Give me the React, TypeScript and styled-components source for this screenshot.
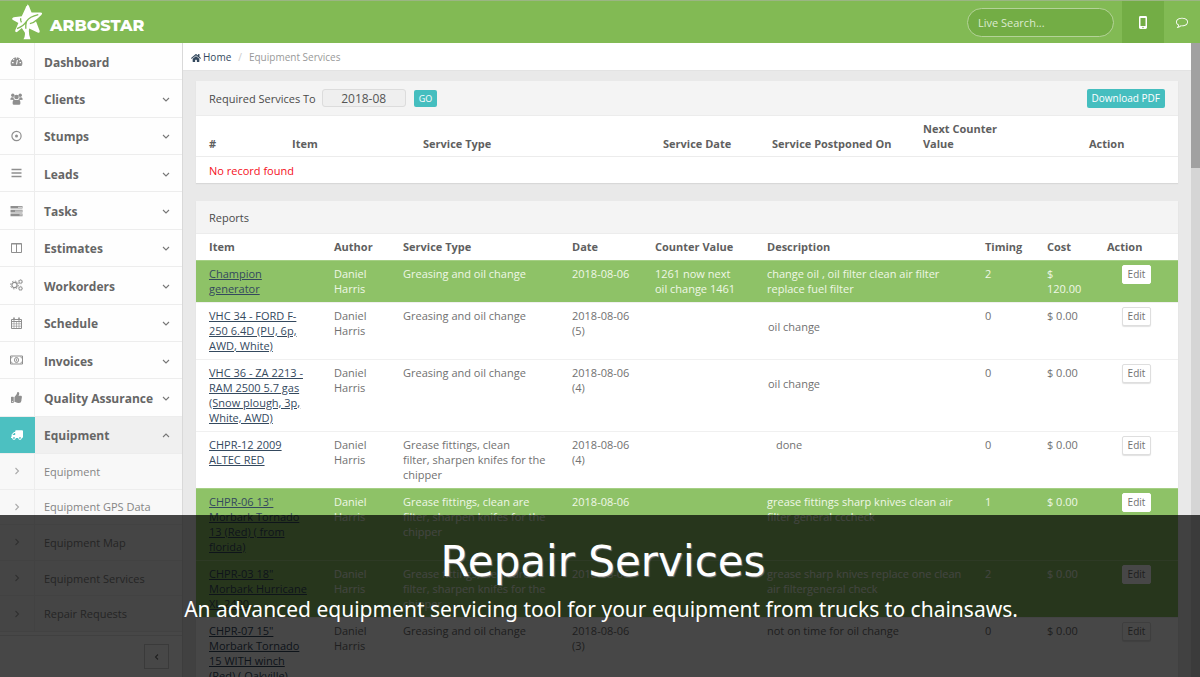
import React from "react";
import styled, { createGlobalStyle, css } from "styled-components";
import { FaHome, FaThumbsUp, FaTruck } from "react-icons/fa";

const Global = createGlobalStyle`
  *, *::before, *::after { box-sizing: border-box; }
  html, body, #root { height: 100%; }
  body {
    margin: 0;
    background: #e9e9e9;
    color: #717171;
    font: 11px/15px "Open Sans", "Noto Sans", sans-serif;
  }
  button, input { font: inherit; color: inherit; margin: 0; }
  ul, ol { list-style: none; margin: 0; padding: 0; }
  a { color: inherit; text-decoration: none; }
`;

const Page = styled.div`
  position: relative;
  display: flex;
  flex-direction: column;
  height: 100vh;
  overflow: hidden;
`;

/* ---------- top bar ---------- */

const TopBar = styled.header`
  display: flex;
  align-items: center;
  flex: none;
  height: 43px;
  padding-left: 12px;
  background: #82ba54;
  border-top: 1px solid #9bb584;
`;

const Brand = styled.a`
  display: flex;
  align-items: center;
  gap: 7px;
  margin-right: auto;
  color: #fff;
  font: 800 16px/20px Montserrat, "Open Sans", sans-serif;

  svg { width: 31px; height: 36px; }
  span { padding-top: 7px; }
`;

const Search = styled.input`
  width: 147px;
  height: 29px;
  margin-right: 8px;
  padding: 0 10px;
  border: 1px solid #b4d398;
  border-radius: 15px;
  background: #73ad45;
  color: #fff;
  outline: none;

  &::placeholder { color: #dcebcf; opacity: 1; }
`;

const TopButton = styled.button<{ $dark?: boolean }>`
  display: flex;
  align-items: center;
  justify-content: center;
  width: ${(p) => (p.$dark ? 42 : 36)}px;
  height: 42px;
  padding: 0;
  border: 0;
  background: ${(p) => (p.$dark ? "#73ad45" : "transparent")};
  color: #fff;
`;

/* ---------- sidebar ---------- */

const Body = styled.div`
  display: flex;
  flex: 1;
  min-height: 0;
`;

const Sidebar = styled.nav`
  flex: none;
  display: flex;
  flex-direction: column;
  width: 183px;
  background: #fefefe;
  border-right: 1px solid #d9d9d9;
`;

const MainMenu = styled.ul`
  flex: none;
  display: grid;
  grid-template-rows: repeat(11, 1fr);
  height: 411px;
`;

const SubMenu = styled.ul`
  flex: none;
  display: grid;
  grid-template-rows: repeat(5, 1fr);
  height: 178px;
  background: #f8f8f8;
`;

const MenuLink = styled.a<{ $active?: boolean; $sub?: boolean }>`
  display: flex;
  align-items: center;
  height: 100%;
  border-bottom: 1px solid #ededed;
  background: ${(p) => (p.$active ? "#f0f0f0" : "transparent")};
  color: ${(p) => (p.$sub ? "#858585" : "#666")};
  font-size: ${(p) => (p.$sub ? 11 : 12)}px;
  font-weight: ${(p) => (p.$sub ? 400 : 700)};
`;

const MenuIcon = styled.span<{ $active?: boolean; $sub?: boolean }>`
  display: flex;
  align-items: center;
  justify-content: center;
  align-self: stretch;
  width: 35px;
  margin-right: 9px;
  padding-right: 1px;
  border-right: 1px solid ${(p) => (p.$active ? "#4cc0c1" : "#ededed")};
  background: ${(p) => (p.$active ? "#4cc0c1" : "transparent")};
  color: ${(p) => (p.$active ? "#fff" : p.$sub ? "#aaa" : "#8f8f8f")};
`;

const MenuLabel = styled.span`
  padding-top: 2px;
`;

const Toggle = styled.span`
  display: flex;
  margin-left: auto;
  padding: 1px 12px 0 0;
  color: #777;
`;

const SidebarFooter = styled.div`
  flex: 1;
  display: flex;
  justify-content: flex-end;
  align-items: flex-start;
  margin-top: 3px;
  padding: 8px 13px;
  border-top: 1px solid #e4e4e4;
`;

const Collapse = styled.button`
  display: flex;
  align-items: center;
  justify-content: center;
  width: 25px;
  height: 25px;
  padding: 0;
  border: 1px solid #d0d0d0;
  background: #fff;
`;

/* ---------- content ---------- */

const Content = styled.main`
  flex: 1;
  min-width: 0;
  overflow: hidden;
`;

const Breadcrumb = styled.ol`
  display: flex;
  align-items: center;
  height: 28px;
  padding: 2px 8px 0;
  background: #fff;
  border-bottom: 1px solid #e3e3e3;
  color: #999;
  font-size: 10px;

  a { display: flex; align-items: center; gap: 2px; color: #34495e; }
  li + li::before { content: "/"; padding: 0 7px; color: #ccc; }
`;

const Panels = styled.div`
  display: flex;
  flex-direction: column;
  gap: 18px;
  padding: 10px 13px;
`;

const Panel = styled.section`
  background: #fff;
  box-shadow: 0 1px 1px #d8d8d8;
`;

const PanelHead = styled.header<{ $tall?: boolean }>`
  display: flex;
  align-items: center;
  height: ${(p) => (p.$tall ? 35 : 33)}px;
  padding: 0 13px;
  background: #f4f4f4;
  border-bottom: 1px solid #ececec;
  color: #4a4a4a;
`;

const PanelTitle = styled.h2`
  margin: 0;
  font-size: 11px;
  font-weight: 400;
`;

const MonthField = styled.input`
  width: 84px;
  height: 18px;
  margin: 0 8px 0 6px;
  padding: 0;
  border: 1px solid #dcdcdc;
  border-radius: 3px;
  background: #efefef;
  color: #555;
  font-size: 12px;
  text-align: center;
`;

const Accent = styled.button<{ $end?: boolean }>`
  height: ${(p) => (p.$end ? 19 : 17)}px;
  margin-left: ${(p) => (p.$end ? "auto" : "0")};
  padding: 0 5px;
  border: 0;
  border-radius: 2px;
  background: #45bebf;
  color: #fff;
  font-size: ${(p) => (p.$end ? 10 : 9)}px;
  line-height: 17px;
`;

const Table = styled.table`
  width: 100%;
  table-layout: fixed;
  border-collapse: collapse;

  th, td { padding: 5px 8px; text-align: left; }
  th:first-child, td:first-child { padding-left: 13px; padding-right: 16px; }
  th { color: #5f5f5f; font-weight: 700; vertical-align: bottom; }
  td { vertical-align: top; white-space: pre-line; }
`;

const RequiredTable = styled(Table)`
  th { border-bottom: 1px solid #ececec; }
  tbody td { padding-top: 6px; color: #f5101c; }
`;

const ReportsTable = styled(Table)`
  th { height: 26px; vertical-align: middle; }
  td { padding-bottom: 6px; border-top: 1px solid #f0f0f0; }
`;

const Row = styled.tr<{ $done?: boolean }>`
  ${(p) =>
    p.$done &&
    css`
      background: #8ec267;
      color: #eef7e6;
      td { border-top-color: #a5cf85; }
    `}
`;

const ItemLink = styled.a`
  color: #34495e;
  text-decoration: underline;
`;

const Note = styled.p<{ $indent?: boolean }>`
  margin: ${(p) => (p.$indent ? "0 0 0 9px" : "11px 0 0 1px")};
`;

const EditButton = styled.button`
  display: block;
  width: 29px;
  height: 19px;
  margin: -1px 0 -3px 15px;
  padding: 0;
  border: 1px solid #dedede;
  border-radius: 2px;
  background: #fff;
  box-shadow: 0 1px 1px #e2e2e2;
  color: #717171;
  font-size: 10px;
  line-height: 15px;

  ${Row}[data-done="true"] & { border-color: #fff; box-shadow: none; }
`;

const ScrollTrack = styled.div`
  flex: none;
  width: 9px;
  background: #d5d5d5;
`;

const ScrollThumb = styled.div`
  height: 125px;
  background: #a1a1a1;
`;

/* ---------- caption over the page ---------- */

const Caption = styled.div`
  position: absolute;
  left: 0;
  right: 0;
  bottom: 0;
  height: 162px;
  padding-top: 22px;
  background: rgba(0, 0, 0, 0.72);
  color: #fff;
  text-align: center;

  h1 {
    margin: 0;
    padding-left: 6px;
    font: 400 42px/50px "DejaVu Sans", Verdana, sans-serif;
    text-shadow: 1px 1px 1px #777;
  }
  p {
    margin: 8px 0 0;
    font: 400 21px/28px "Noto Sans", "Open Sans", sans-serif;
    padding-left: 2px;
  }
`;

/* ---------- icons ---------- */

const Glyph = ({ children, w = 13, h = 12 }: { children: React.ReactNode; w?: number; h?: number }) => (
  <svg width={w} height={h} viewBox={`0 0 ${w} ${h}`} fill="none" stroke="currentColor" strokeWidth="1" aria-hidden="true">
    {children}
  </svg>
);

const Chevron = ({ d }: { d: "up" | "down" | "left" | "right" }) => {
  const paths = {
    up: "M1 6l3-3 3 3",
    down: "M1 3l3 3 3-3",
    left: "M5 1.5L2.5 4 5 6.5",
    right: "M2.5 1l3 3-3 3",
  };
  return (
    <Glyph w={8} h={8}>
      <path d={paths[d]} strokeWidth="1.1" />
    </Glyph>
  );
};

const Logo = () => (
  <svg viewBox="35 13 92 106" aria-hidden="true">
    <path fill="#fff" d="M80 14q4 0 6 6l7 18 26 0q9 1 3 7L105 61l12 31q1 8-6 5L86 85l-1 8q0 14 5 24H69q6-10 4-20l-9-13-13 11q-8 4-6-5l9-21-16-9q-6-5 2-8l24-3 11-24q2-7 5-7z" />
    <path fill="none" stroke="#82ba54" strokeWidth="4" d="M50 86q20-9 28-22 9-14 35-20M63 67q-4-6-2-12M88 71q10-1 20-11M78 64q-3 10-2 22" />
  </svg>
);

const icons: Record<string, React.ReactNode> = {
  Dashboard: (
    <Glyph>
      <path d="M1.6 10.5A5.4 5.4 0 1 1 11.4 10.5z" fill="currentColor" />
      <path stroke="#fff" strokeWidth="1.1" d="M6.5 9.5L7.4 5M2 7.6h1.6M9.6 7.6H11M3.2 4.2l1 1M6.5 2.3v1.3M9.8 4.2l-.8.9" />
    </Glyph>
  ),
  Clients: (
    <Glyph>
      <g fill="currentColor" stroke="none">
        <circle cx="2.8" cy="2.2" r="1.7" />
        <circle cx="10.2" cy="2.2" r="1.7" />
        <circle cx="6.5" cy="4" r="2.3" />
        <path d="M.3 6.8q0-2.6 1.5-2.6l2 .4q-.4 1.4.4 2.5zM12.7 6.8q0-2.6-1.5-2.6l-2 .4q.4 1.4-.4 2.5zM2.6 10.2q0-3.6 2-3.7 1.9 1.2 3.8 0 2 .1 2 3.7 0 1.5-1.3 1.5H3.9q-1.3 0-1.3-1.5z" />
      </g>
    </Glyph>
  ),
  Stumps: (
    <Glyph>
      <circle cx="6.5" cy="6" r="4.6" strokeWidth="1.2" />
      <circle cx="6.5" cy="6" r="1.5" fill="currentColor" stroke="none" />
    </Glyph>
  ),
  Leads: (
    <Glyph>
      <path d="M1.5 2.5h10M1.5 6h10M1.5 9.5h10" strokeWidth="1.3" />
    </Glyph>
  ),
  Tasks: (
    <Glyph>
      <path fill="currentColor" stroke="none" d="M.5 1h12v2.6H.5zM.5 4.8h12v2.6H.5zM.5 8.6h12v2.6H.5z" />
      <path stroke="#fff" strokeWidth=".7" d="M8 2.3h4M5 6.1h7M9.5 9.9H12" />
    </Glyph>
  ),
  Estimates: (
    <Glyph>
      <path d="M1.5 1.5h10v9h-10zM6.5 1.5v9M1.5 2h10" />
    </Glyph>
  ),
  Workorders: (
    <Glyph>
      <circle cx="4.5" cy="6" r="2.6" strokeWidth="1.2" />
      <circle cx="4.5" cy="6" r="3.9" strokeWidth="1" strokeDasharray="1.5 1.56" />
      <circle cx="10.5" cy="2.7" r="1.5" />
      <circle cx="10.5" cy="9.4" r="1.5" />
      <circle cx="10.5" cy="2.7" r="2.2" strokeWidth=".6" strokeDasharray="1 .73" />
      <circle cx="10.5" cy="9.4" r="2.2" strokeWidth=".6" strokeDasharray="1 .73" />
    </Glyph>
  ),
  Schedule: (
    <Glyph>
      <path d="M1.5 2.5h10v9h-10zM1.5 4.5h10" />
      <path strokeWidth=".6" d="M4 4.5v7M6.5 4.5v7M9 4.5v7M1.5 6.8h10M1.5 9.2h10" />
      <path strokeWidth="1.6" d="M4 .4v3M9 .4v3" />
    </Glyph>
  ),
  Invoices: (
    <Glyph>
      <path d="M.5 2h12v8H.5z" />
      <ellipse cx="6.5" cy="6" rx="2" ry="2.5" />
      <path d="M6.5 4.6v2.8M1 4q1.3 0 1.3-1.5M12 4q-1.3 0-1.3-1.5M1 8q1.3 0 1.3 1.5M12 8q-1.3 0-1.3 1.5" strokeWidth=".8" />
    </Glyph>
  ),
  "Quality Assurance": <FaThumbsUp size={11} />,
  Equipment: <FaTruck size={12} transform="scale(-1 1)" />,
};

/* ---------- data ---------- */

const menu = ["Dashboard", "Clients", "Stumps", "Leads", "Tasks", "Estimates", "Workorders", "Schedule", "Invoices", "Quality Assurance", "Equipment"];
const subMenu = ["Equipment", "Equipment GPS Data", "Equipment Map", "Equipment Services", "Repair Requests"];

const requiredCols: [React.ReactNode, number][] = [
  ["#", 88],
  ["Item", 131],
  ["Service Type", 240],
  ["Service Date", 109],
  ["Service Postponed On", 151],
  [<>Next Counter<br />Value</>, 166],
  ["Action", 97],
];

const reportCols: [string, number][] = [
  ["Item", 130],
  ["Author", 69],
  ["Service Type", 169],
  ["Date", 83],
  ["Counter Value", 112],
  ["Description", 218],
  ["Timing", 62],
  ["Cost", 60],
  ["Action", 79],
];

const share = (w: number) => `${(w / 982) * 100}%`;

type Report = {
  item: string;
  type: string;
  date: string;
  counter?: string;
  text: React.ReactNode;
  timing: number;
  cost: string;
  done?: boolean;
};

const reports: Report[] = [
  { item: "Champion generator", type: "Greasing and oil change", date: "2018-08-06", counter: "1261 now next\noil change 1461", text: "change oil , oil filter clean air filter\nreplace fuel filter", timing: 2, cost: "$\n120.00", done: true },
  { item: "VHC 34 - FORD F-250 6.4D (PU, 6p, AWD, White)", type: "Greasing and oil change", date: "2018-08-06\n(5)", text: <Note>oil change</Note>, timing: 0, cost: "$ 0.00" },
  { item: "VHC 36 - ZA 2213 - RAM 2500 5.7 gas (Snow plough, 3p, White, AWD)", type: "Greasing and oil change", date: "2018-08-06\n(4)", text: <Note>oil change</Note>, timing: 0, cost: "$ 0.00" },
  { item: "CHPR-12 2009 ALTEC RED", type: "Grease fittings, clean\nfilter, sharpen knifes for the chipper", date: "2018-08-06\n(4)", text: <Note $indent>done</Note>, timing: 0, cost: "$ 0.00" },
  { item: 'CHPR-06 13" Morbark Tornado 13 (Red) ( from florida)', type: "Grease fittings, clean are\nfilter, sharpen knifes for the chipper", date: "2018-08-06", text: "grease fittings sharp knives clean air\nfilter general cccheck", timing: 1, cost: "$ 0.00", done: true },
  { item: 'CHPR-03 18" Morbark Hurricane XL 2400', type: "Grease fittings, clean are\nfilter, sharpen knifes for the chipper", date: "2018-08-06", text: "grease sharp knives replace one clean\nair filtergeneral check", timing: 2, cost: "$ 0.00", done: true },
  { item: 'CHPR-07 15" Morbark Tornado 15 WITH winch (Red) ( Oakville)', type: "Greasing and oil change", date: "2018-08-06\n(3)", text: "not on time for oil change", timing: 0, cost: "$ 0.00" },
];

export default function App() {
  return (
    <Page>
      <Global />
      <TopBar>
        <Brand href="#">
          <Logo />
          <span>ARBOSTAR</span>
        </Brand>
        <Search type="search" aria-label="Live Search" placeholder="Live Search..." />
        <TopButton $dark aria-label="Mobile">
          <svg width="8" height="13" viewBox="0 0 8 13" aria-hidden="true">
            <path fill="currentColor" fillRule="evenodd" d="M1.4 0h5.2Q8 0 8 1.4v10.2Q8 13 6.6 13H1.4Q0 13 0 11.6V1.4Q0 0 1.4 0zM1.5 2v8h5V2zM3.3 11.5a.7.7 0 1 0 1.4 0 .7.7 0 1 0-1.4 0z" />
          </svg>
        </TopButton>
        <TopButton aria-label="Messages">
          <svg width="12" height="12" viewBox="0 0 1792 1792" aria-hidden="true">
            <path fill="currentColor" d="M896 384q-204 0-381.5 69.5t-282 187.5-104.5 255q0 112 71.5 213.5t201.5 175.5l87 50-27 96q-24 91-70 172 152-63 275-171l43-38 57 6q69 8 130 8 204 0 381.5-69.5t282-187.5 104.5-255-104.5-255-282-187.5-381.5-69.5zm896 512q0 174-120 321.5t-326 233-450 85.5q-70 0-145-8-198 175-460 242-49 14-114 22h-5q-15 0-27-10.5t-16-27.5v-1q-3-4-.5-12t2-10 4.5-9.5l6-9 7-8.5 8-9q7-8 31-34.5t34.5-38 31-39.5 32.5-51 27-59 26-76q-157-89-247.5-220t-90.5-281q0-174 120-321.5t326-233 450-85.5 450 85.5 326 233 120 321.5z" />
          </svg>
        </TopButton>
      </TopBar>

      <Body>
        <Sidebar>
          <MainMenu>
            {menu.map((name) => {
              const active = name === "Equipment";
              return (
                <li key={name}>
                  <MenuLink href="#" $active={active}>
                    <MenuIcon $active={active}>{icons[name]}</MenuIcon>
                    <MenuLabel>{name}</MenuLabel>
                    {name !== "Dashboard" && (
                      <Toggle>
                        <Chevron d={active ? "up" : "down"} />
                      </Toggle>
                    )}
                  </MenuLink>
                </li>
              );
            })}
          </MainMenu>
          <SubMenu>
            {subMenu.map((name) => (
              <li key={name}>
                <MenuLink href="#" $sub>
                  <MenuIcon $sub>
                    <Chevron d="right" />
                  </MenuIcon>
                  {name}
                </MenuLink>
              </li>
            ))}
          </SubMenu>
          <SidebarFooter>
            <Collapse aria-label="Collapse menu">
              <Chevron d="left" />
            </Collapse>
          </SidebarFooter>
        </Sidebar>

        <Content>
          <Breadcrumb>
            <li>
              <a href="#">
                <FaHome size={10} /> Home
              </a>
            </li>
            <li>Equipment Services</li>
          </Breadcrumb>

          <Panels>
            <Panel>
              <PanelHead $tall>
                <label htmlFor="month">Required Services To</label>
                <MonthField id="month" defaultValue="2018-08" />
                <Accent>GO</Accent>
                <Accent $end>Download PDF</Accent>
              </PanelHead>
              <RequiredTable>
                <colgroup>
                  {requiredCols.map(([, w], i) => (
                    <col key={i} style={{ width: share(w) }} />
                  ))}
                </colgroup>
                <thead>
                  <tr>
                    {requiredCols.map(([label], i) => (
                      <th key={i}>{label}</th>
                    ))}
                  </tr>
                </thead>
                <tbody>
                  <tr>
                    <td colSpan={7}>No record found</td>
                  </tr>
                </tbody>
              </RequiredTable>
            </Panel>

            <Panel>
              <PanelHead>
                <PanelTitle>Reports</PanelTitle>
              </PanelHead>
              <ReportsTable>
                <colgroup>
                  {reportCols.map(([name, w]) => (
                    <col key={name} style={{ width: share(w) }} />
                  ))}
                </colgroup>
                <thead>
                  <tr>
                    {reportCols.map(([name]) => (
                      <th key={name}>{name}</th>
                    ))}
                  </tr>
                </thead>
                <tbody>
                  {reports.map((r) => (
                    <Row key={r.item} $done={r.done} data-done={!!r.done}>
                      <td>
                        <ItemLink href="#">{r.item}</ItemLink>
                      </td>
                      <td>{"Daniel\nHarris"}</td>
                      <td>{r.type}</td>
                      <td>{r.date}</td>
                      <td>{r.counter}</td>
                      <td>{r.text}</td>
                      <td>{r.timing}</td>
                      <td>{r.cost}</td>
                      <td>
                        <EditButton>Edit</EditButton>
                      </td>
                    </Row>
                  ))}
                </tbody>
              </ReportsTable>
            </Panel>
          </Panels>
        </Content>
        <ScrollTrack>
          <ScrollThumb />
        </ScrollTrack>
      </Body>

      <Caption>
        <h1>Repair Services</h1>
        <p>An advanced equipment servicing tool for your equipment from trucks to chainsaws.</p>
      </Caption>
    </Page>
  );
}
